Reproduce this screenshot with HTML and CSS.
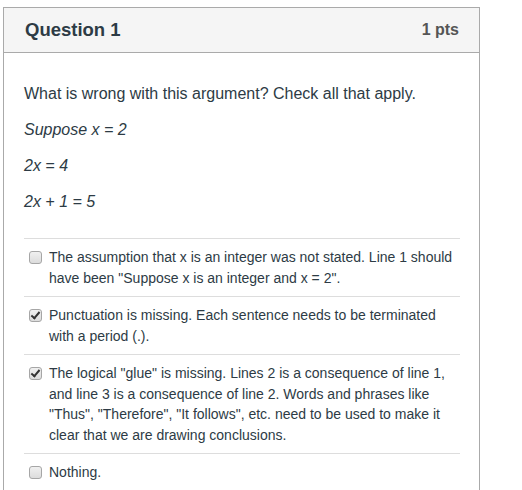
FILE: index.html
```html
<!DOCTYPE html>
<html lang="en">
<head>
  <meta charset="UTF-8">
  <title>Question 1</title>
  <link rel="stylesheet" href="styles.css">
</head>
<body>

  <div class="question">
    <div class="question-header">
      <span class="question-name">Question 1</span>
      <span class="question-points">1 pts</span>
    </div>

    <div class="question-body">
      <p>What is wrong with this argument? Check all that apply.</p>
      <p class="math">Suppose x = 2</p>
      <p class="math">2x = 4</p>
      <p class="math">2x + 1 = 5</p>

      <div class="answers">
        <label class="answer">
          <input type="checkbox">
          <span>The assumption that x is an integer was not stated. Line 1 should have been "Suppose x is an integer and x = 2".</span>
        </label>
        <label class="answer">
          <input type="checkbox" checked>
          <span>Punctuation is missing. Each sentence needs to be terminated with a period (.).</span>
        </label>
        <label class="answer">
          <input type="checkbox" checked>
          <span>The logical "glue" is missing. Lines 2 is a consequence of line 1, and line 3 is a consequence of line 2. Words and phrases like "Thus", "Therefore", "It follows", etc. need to be used to make it clear that we are drawing conclusions.</span>
        </label>
        <label class="answer">
          <input type="checkbox">
          <span>Nothing.</span>
        </label>
      </div>
    </div>
  </div>

</body>
</html>
```

FILE: styles.css
```css
body {
  margin: 0;
  padding: 7px 0 0 3px;
  font-family: "Liberation Sans", Arial, sans-serif;
  color: #2d3b45;
  background: white;
}
.question {
  width: 475px;
  border: 1px solid #aaa;
  border-bottom: none;
}
.question-header {
  display: flex;
  justify-content: space-between;
  align-items: center;
  height: 44px;
  padding: 0 20px 0 21px;
  background: #f5f5f5;
  border-bottom: 1px solid #aaa;
}
.question-name {
  font-size: 18.5px;
  font-weight: bold;
}
.question-points {
  font-size: 16px;
  font-weight: bold;
  color: #555;
}
.question-body {
  padding: 31px 19px 0 20px;
}
.question-body p {
  margin: 0 0 16px;
  font-size: 16px;
  line-height: 20px;
}
.math {
  font-style: italic;
}
.answers {
  margin-top: 26px;
}
.answer {
  display: flex;
  align-items: flex-start;
  padding: 8px 0;
  border-top: 1px solid #ddd;
  font-size: 14px;
  line-height: 20.5px;
  cursor: pointer;
}
.answer input {
  appearance: none;
  -webkit-appearance: none;
  flex: none;
  width: 13px;
  height: 13px;
  margin: 4px 7px 0 5px;
  border: 1px solid #a6a6a6;
  border-radius: 3px;
  background: linear-gradient(#f0f0f0, #dcdcdc);
  position: relative;
}
.answer input:checked::after {
  content: "";
  position: absolute;
  left: 3px;
  top: 0px;
  width: 3px;
  height: 7px;
  border: solid #333;
  border-width: 0 2px 2px 0;
  transform: rotate(40deg);
}
```
